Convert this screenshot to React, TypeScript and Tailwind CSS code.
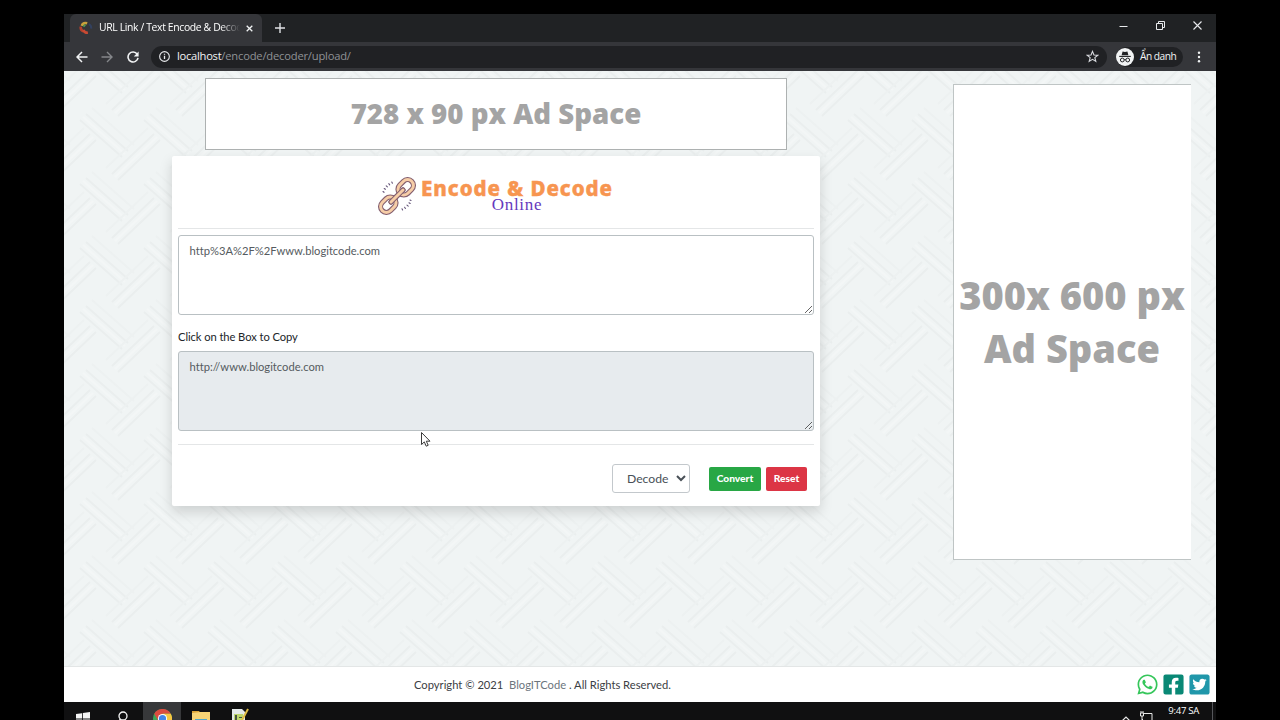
import { useState } from "react";
import { FaFacebookSquare, FaTwitterSquare, FaWhatsapp } from "react-icons/fa";

function TabIcon() {
  return (
    <svg viewBox="0 0 14 14" className="h-[14px] w-[14px] shrink-0" fill="none" strokeWidth="2.6">
      <path d="M2.8 4.800C3.500 2.500 5.500 1.600 8.200 2.300" stroke="#c9a13b" />
      <path d="M6.500 3.800c-1 .4-1.500 1-1.700 2" stroke="#4f9a52" strokeWidth="1.800" />
      <path d="M1.800 5.600c-.4 2.400.4 3.800 2.600 4.600" stroke="#b3402c" />
      <path d="M4.300 9c.8 2 2.200 2.900 4.600 2.800" stroke="#c94a33" />
      <path d="M10 3.200c1.600.8 2.400 2.400 2.200 4.400" stroke="#33415f" strokeWidth="2" />
    </svg>
  );
}

function BrowserChrome() {
  return (
    <header className="h-[57px] shrink-0 bg-[#202224] font-['Open_Sans','Noto_Sans',sans-serif] text-white">
      <div className="flex h-7 items-start">
        <div className="ml-[6px] flex h-7 w-[192px] items-center rounded-t-md bg-[#35363a] pl-[9px]">
          <TabIcon />
          <div className="ml-[6px] w-[141px] shrink-0 overflow-hidden whitespace-nowrap text-[10.4px] tracking-[-0.36px] [mask-image:linear-gradient(to_right,black_86%,transparent)]">
            URL Link / Text Encode &amp; Decode
          </div>
          <svg viewBox="0 0 8 8" className="ml-[6px] h-[7px] w-[7px]" stroke="#f1f3f4" strokeWidth="1.5">
            <path d="M.8.8l6.4 6.4M7.2.8L.8 7.2" />
          </svg>
        </div>
        <svg viewBox="0 0 10 10" className="ml-[13px] mt-[9px] h-[10px] w-[10px]" stroke="#dfe1e5" strokeWidth="1.4">
          <path d="M5 0v10M0 5h10" />
        </svg>
        <div className="ml-auto mr-[14px] mt-[7px] flex items-center gap-[28px]">
          <svg viewBox="0 0 9 9" className="h-[9px] w-[9px]" stroke="#e8eaed">
            <path d="M.5 5.500h8" />
          </svg>
          <svg viewBox="0 0 9 9" className="h-[9px] w-[9px]" fill="none" stroke="#e8eaed">
            <path d="M.5 2.500h6v6h-6zM2.500 2.500v-2h6v6h-2" />
          </svg>
          <svg viewBox="0 0 9 9" className="h-[9px] w-[9px]" stroke="#e8eaed" strokeWidth="1.1">
            <path d="M.5.5l8 8M8.500.5l-8 8" />
          </svg>
        </div>
      </div>
      <div className="flex h-[29px] items-center bg-[#35363a] pl-3 pr-[15px]">
        <svg viewBox="0 0 12 12" className="h-3 w-3" fill="none" stroke="#f1f3f4" strokeWidth="1.5">
          <path d="M11.500 6H1.200M6 1L1 6l5 5" />
        </svg>
        <svg viewBox="0 0 12 12" className="ml-[13px] h-3 w-3" fill="none" stroke="#85878a" strokeWidth="1.4">
          <path d="M.5 6h10.300M6 1l5 5-5 5" />
        </svg>
        <svg viewBox="0 0 12 12" className="ml-[14px] h-3 w-3" fill="none" stroke="#f1f3f4" strokeWidth="1.6">
          <path d="M10.200 3.200A5 5 0 1 0 11 6.800" />
          <path d="M11.600.4v5H6.800z" fill="#f1f3f4" stroke="none" />
        </svg>
        <div className="ml-3 flex h-[22px] w-[956px] items-center rounded-full bg-[#202124] pl-2 pr-2">
          <svg viewBox="0 0 12 12" className="h-[11px] w-[11px]" fill="none" stroke="#e8eaed" strokeWidth="1.2">
            <circle cx="6" cy="6" r="5.3" />
            <path d="M6 5.200v3.600M6 3v1.200" strokeWidth="1.4" />
          </svg>
          <span className="ml-[7px] text-[11.2px] tracking-[-0.2px] text-[#8f9296]">
            <span className="tracking-[-0.28px] text-[#f1f3f4]">localhost</span>/encode/decoder/upload/
          </span>
          <svg viewBox="0 0 24 24" className="ml-auto h-[13px] w-[13px]" fill="none" stroke="#dadce0" strokeWidth="2">
            <path d="M12 2.500l2.700 6.600 7.100.5-5.500 4.600 1.800 6.900-6.100-3.800-6.100 3.800 1.800-6.900-5.500-4.600 7.100-.5z" />
          </svg>
        </div>
        <div className="ml-[9px] flex h-[20px] w-[67px] items-center rounded-full bg-[#202124]">
          <svg viewBox="0 0 18 18" className="h-[18px] w-[18px] shrink-0">
            <circle cx="9" cy="9" r="9" fill="#f1f3f4" />
            <path d="M5.600 7.200l1-3.800 2.400.5 2.400-.5 1 3.800z" fill="#202124" />
            <path d="M3.200 8.400h11.600" stroke="#202124" strokeWidth="1.1" />
            <g fill="none" stroke="#202124" strokeWidth="1">
              <circle cx="6.300" cy="12" r="1.9" />
              <circle cx="11.700" cy="12" r="1.9" />
              <path d="M8.200 11.800q.8-.6 1.600 0" />
            </g>
          </svg>
          <span className="ml-[6px] whitespace-nowrap text-[10.200px] tracking-[-0.5px] text-[#f1f3f4]">Ẩn danh</span>
        </div>
        <svg viewBox="0 0 4 12" className="ml-auto h-3 w-1" fill="#f1f3f4">
          <circle cx="2" cy="1.8" r="1.2" />
          <circle cx="2" cy="6" r="1.2" />
          <circle cx="2" cy="10.2" r="1.2" />
        </svg>
      </div>
    </header>
  );
}

const tileOffsets = [-64, 0, 64];

// Basket weave: each 64px tile holds one strip per diagonal, and strips run over into the next tile
function WeaveBackground() {
  return (
    <svg className="absolute inset-0 h-full w-full" aria-hidden="true">
      <defs>
        <g id="strips" fill="none" strokeWidth="2">
          <path d="M-2 6l42 37M4 0l42 37M36 66l42-40M30 60l42-40" stroke="#e5e9e9" />
          <path d="M1 3l42 37M33 63l42-40" stroke="#f6f8f8" />
          <path d="M10 -6l42 37M24 54l42-40" stroke="#eaeeee" />
        </g>
        <pattern id="weave" x="18" y="43" width="64" height="64" patternUnits="userSpaceOnUse">
          {tileOffsets.map((x) => tileOffsets.map((y) => <use key={`${x},${y}`} href="#strips" x={x} y={y} />))}
        </pattern>
      </defs>
      <rect width="100%" height="100%" fill="#f0f4f4" />
      <rect width="100%" height="100%" fill="url(#weave)" opacity="0.55" />
    </svg>
  );
}

function ChainIcon() {
  return (
    <svg viewBox="0 0 38 38" className="-ml-px mt-px h-[38px] w-[38px] shrink-0" fill="none" strokeLinecap="round">
      <g transform="rotate(-45 19 19)">
        <g stroke="#85606f" strokeWidth="5.2">
          <rect x="-1.8" y="13.2" width="17" height="11.6" rx="5.8" />
          <rect x="22.8" y="13.2" width="17" height="11.6" rx="5.8" />
          <path d="M10.500 19h17" />
        </g>
        <g stroke="#f6cda7" strokeWidth="3">
          <rect x="-1.8" y="13.2" width="17" height="11.6" rx="5.8" />
          <rect x="22.8" y="13.2" width="17" height="11.6" rx="5.8" />
        </g>
        <path d="M10.500 19h17" stroke="#85606f" strokeWidth="5.2" />
        <path d="M10.500 19h17" stroke="#f6cda7" strokeWidth="3" />
      </g>
      <g stroke="#655579" strokeWidth="1.1">
        <path d="M5 14.500l1 .8M6.200 11.500l1.200.8M8.200 8.800l1.200 1M10.800 6.600l.9 1.200M13.800 5l.6 1.300" />
        <path d="M33 23.500l-1-.5M32.200 26.500l-1.200-.7M30.200 29.200l-1.200-1M27.400 31.500l-.8-1.200M24.600 33l-.6-1.200" />
      </g>
    </svg>
  );
}

function Logo() {
  return (
    <div className="flex h-[72px] items-start justify-center pt-5">
      <ChainIcon />
      <div className="ml-[5px] flex w-[192px] flex-col items-center">
        <span className="whitespace-nowrap font-['Noto_Sans',sans-serif] text-[20.500px] font-extrabold leading-[24px] tracking-[0.98px] text-[#f79550] [-webkit-text-stroke:0.5px_#f79550]">
          Encode &amp; Decode
        </span>
        <span className="-mt-[5px] font-['Liberation_Serif',serif] text-[17px] leading-[20px] tracking-[0.7px] text-[#6538bd]">
          Online
        </span>
      </div>
    </div>
  );
}

function Converter() {
  const [input, setInput] = useState("http%3A%2F%2Fwww.blogitcode.com");
  const [output, setOutput] = useState("http://www.blogitcode.com");
  const [mode, setMode] = useState("Decode");

  function handleConvert() {
    try {
      setOutput(mode === "Decode" ? decodeURIComponent(input) : encodeURIComponent(input));
    } catch {
      setOutput("");
    }
  }

  function handleReset() {
    setInput("");
    setOutput("");
  }

  return (
    <section className="mt-[6px] h-[350px] w-[648px] rounded-[2px] bg-white px-[6px] shadow-[0_6px_13px_rgba(0,0,0,0.15)]">
      <Logo />
      <hr className="border-[#e4e6e7]" />
      <textarea
        value={input}
        onChange={(event) => setInput(event.target.value)}
        className="mt-[6px] block h-[80px] w-full rounded-[3px] border border-[#b9c0c3] bg-white px-[10.500px] py-[6px] text-[11.200px] leading-[17px] text-[#555b60] outline-none [font-variant-ligatures:none]"
      />
      <p className="mt-[13px] h-[17px] text-[11.200px] leading-[17px] tracking-[-0.08px] text-[#212529]">Click on the Box to Copy</p>
      <textarea
        readOnly
        value={output}
        onClick={() => void navigator.clipboard?.writeText(output)}
        className="mt-[6px] block h-[80px] w-full rounded-[3px] border border-[#b9c0c3] bg-[#e7ebee] px-[10.500px] py-[6px] text-[11.200px] leading-[17px] text-[#555b60] outline-none [font-variant-ligatures:none]"
      />
      <hr className="mt-[13px] border-[#e4e6e7]" />
      <div className="mr-[7px] mt-[19px] flex items-center justify-end">
        <select
          value={mode}
          onChange={(event) => setMode(event.target.value)}
          className="h-[29px] w-[78px] rounded-[3px] border border-[#c3c8cc] bg-white pl-[10px] text-[12.200px] text-[#495057]"
        >
          <option>Decode</option>
          <option>Encode</option>
        </select>
        <button onClick={handleConvert} className="ml-[19px] h-6 w-[52px] rounded-[2px] bg-[#28a745] font-['Lato_Black','Lato',sans-serif] text-[10.200px] font-black text-white">
          Convert
        </button>
        <button onClick={handleReset} className="ml-[5px] h-6 w-[41px] rounded-[2px] bg-[#dc3545] font-['Lato_Black','Lato',sans-serif] text-[10.200px] font-black text-white">
          Reset
        </button>
      </div>
    </section>
  );
}

function Footer() {
  return (
    <footer className="flex h-9 shrink-0 items-center border-t border-[#e3e6e6] bg-white pl-[350px] pr-[5px] text-[11.200px] text-[#3b4044]">
      <p className="mt-[2px] whitespace-pre">
        Copyright © 2021  <a className="text-[#6c757d]">BlogITCode</a> . All Rights Reserved.
      </p>
      <div className="-mt-px ml-auto flex gap-[3px]">
        <FaWhatsapp className="h-[23px] w-[23px] text-[#35c65a]" />
        <FaFacebookSquare className="h-[23px] w-[23px] text-[#098875]" />
        <FaTwitterSquare className="h-[23px] w-[23px] text-[#2097aa]" />
      </div>
    </footer>
  );
}

function Taskbar() {
  return (
    <div className="flex h-[18px] shrink-0 items-start overflow-hidden bg-[#101011]">
      <svg viewBox="0 0 14 14" className="ml-3 mt-[10px] h-[14px] w-[14px] shrink-0" fill="#f5f5f5">
        <path d="M0 2l6-.8v5.400H0zM6.800 1.100L14 0v6.600H6.800zM0 7.400h6v5.400L0 12zM6.800 7.400H14V14l-7.200-1z" />
      </svg>
      <svg viewBox="0 0 14 14" className="ml-[26px] mt-[9px] h-[14px] w-[14px] shrink-0" fill="none" stroke="#f5f5f5" strokeWidth="1.3">
        <circle cx="7" cy="5" r="4" />
        <path d="M4.500 8L1.500 12" />
      </svg>
      <div className="ml-[13px] flex h-[18px] w-[38px] justify-center bg-[#37383a] pt-[7px]">
        <svg viewBox="0 0 20 20" className="h-[19px] w-[19px] shrink-0">
          <circle cx="10" cy="10" r="10" fill="#3fa557" />
          <path d="M1.300 5A10 10 0 0 1 18.700 5H10l-4.400 7.500z" fill="#dc4b40" />
          <path d="M10 5h8.700A10 10 0 0 1 10 20l4.400-7.500z" fill="#f5c642" />
          <circle cx="10" cy="10" r="4.800" fill="#fff" />
          <circle cx="10" cy="10" r="3.800" fill="#4285e8" />
        </svg>
      </div>
      <svg viewBox="0 0 18 14" className="ml-[11px] mt-[8px] h-[14px] w-[18px] shrink-0">
        <path d="M0 1h7l1.500 2H0z" fill="#dca437" />
        <path d="M0 3l8-1h10v12H0z" fill="#f8d475" />
        <path d="M3 9h12v5H3z" fill="#54a6c8" />
      </svg>
      <svg viewBox="0 0 19 16" className="ml-[21px] mt-[6px] h-4 w-[19px] shrink-0">
        <path d="M1 1h10l3 3v12H1z" fill="#e3e9e9" />
        <path d="M3 6h9v10H3z" fill="#bcd56c" />
        <path d="M4 7h2v5H4zM8 9h3v1H8z" fill="#445443" />
        <path d="M17 1l-7 13" stroke="#e0bd45" strokeWidth="2" />
      </svg>
      <svg viewBox="0 0 10 8" className="ml-auto mt-[13px] h-2 w-[10px] shrink-0" fill="none" stroke="#e8e8e8" strokeWidth="1.2">
        <path d="M1 6l4-4 4 4" />
      </svg>
      <svg viewBox="0 0 14 12" className="ml-[8px] mt-[9px] h-3 w-[14px] shrink-0" fill="none" stroke="#e8e8e8">
        <path d="M5 2.500h8v8H3.500V8" />
        <path d="M1.500 2h3v3h-3zM3 5v4M2 0v2M4 0v2" />
      </svg>
      <span className="ml-[15px] mt-[2px] whitespace-nowrap font-['Open_Sans',sans-serif] text-[9.600px] leading-[14px] tracking-[-0.3px] text-white">
        9:47 SA
      </span>
      <div className="ml-[13px] mr-[3px] h-[18px] w-px shrink-0 bg-[#55565a]" />
    </div>
  );
}

export default function App() {
  return (
    <div className="flex h-[720px] w-[1280px] overflow-hidden bg-black px-16 pt-[14px] font-['Lato',sans-serif]">
      <div className="flex w-[1152px] flex-col">
        <BrowserChrome />
        <main className="relative h-[595px] shrink-0">
          <WeaveBackground />
          <div className="relative flex items-start pl-[108px]">
            <div className="flex w-[648px] flex-col items-center pt-[7px]">
              <div className="flex h-[72px] w-[582px] items-center justify-center border border-[#adb1b1] bg-white font-['Open_Sans',sans-serif] text-[27.700px] font-extrabold text-[#a4a4a4]">
                728 x 90 px Ad Space
              </div>
              <Converter />
            </div>
            <aside className="ml-[133px] mt-[13px] flex h-[476px] w-[238px] items-center justify-center border-y border-l border-[#bfc5c5] bg-white text-center font-['Open_Sans',sans-serif] text-[38px] font-extrabold leading-[53px] text-[#a4a4a4]">
              <span className="-ml-px whitespace-nowrap">
                300x 600 px
                <br />
                Ad Space
              </span>
            </aside>
          </div>
          <svg viewBox="0 0 12 17" className="absolute left-[356px] top-[360px] h-[17px] w-3" fill="#fff" stroke="#3c3c3c" strokeWidth="1">
            <path d="M1.500 1.500v12l2.800-2.600 1.900 4.300 2-.9-1.900-4.100h3.700z" />
          </svg>
        </main>
        <Footer />
        <Taskbar />
      </div>
    </div>
  );
}
